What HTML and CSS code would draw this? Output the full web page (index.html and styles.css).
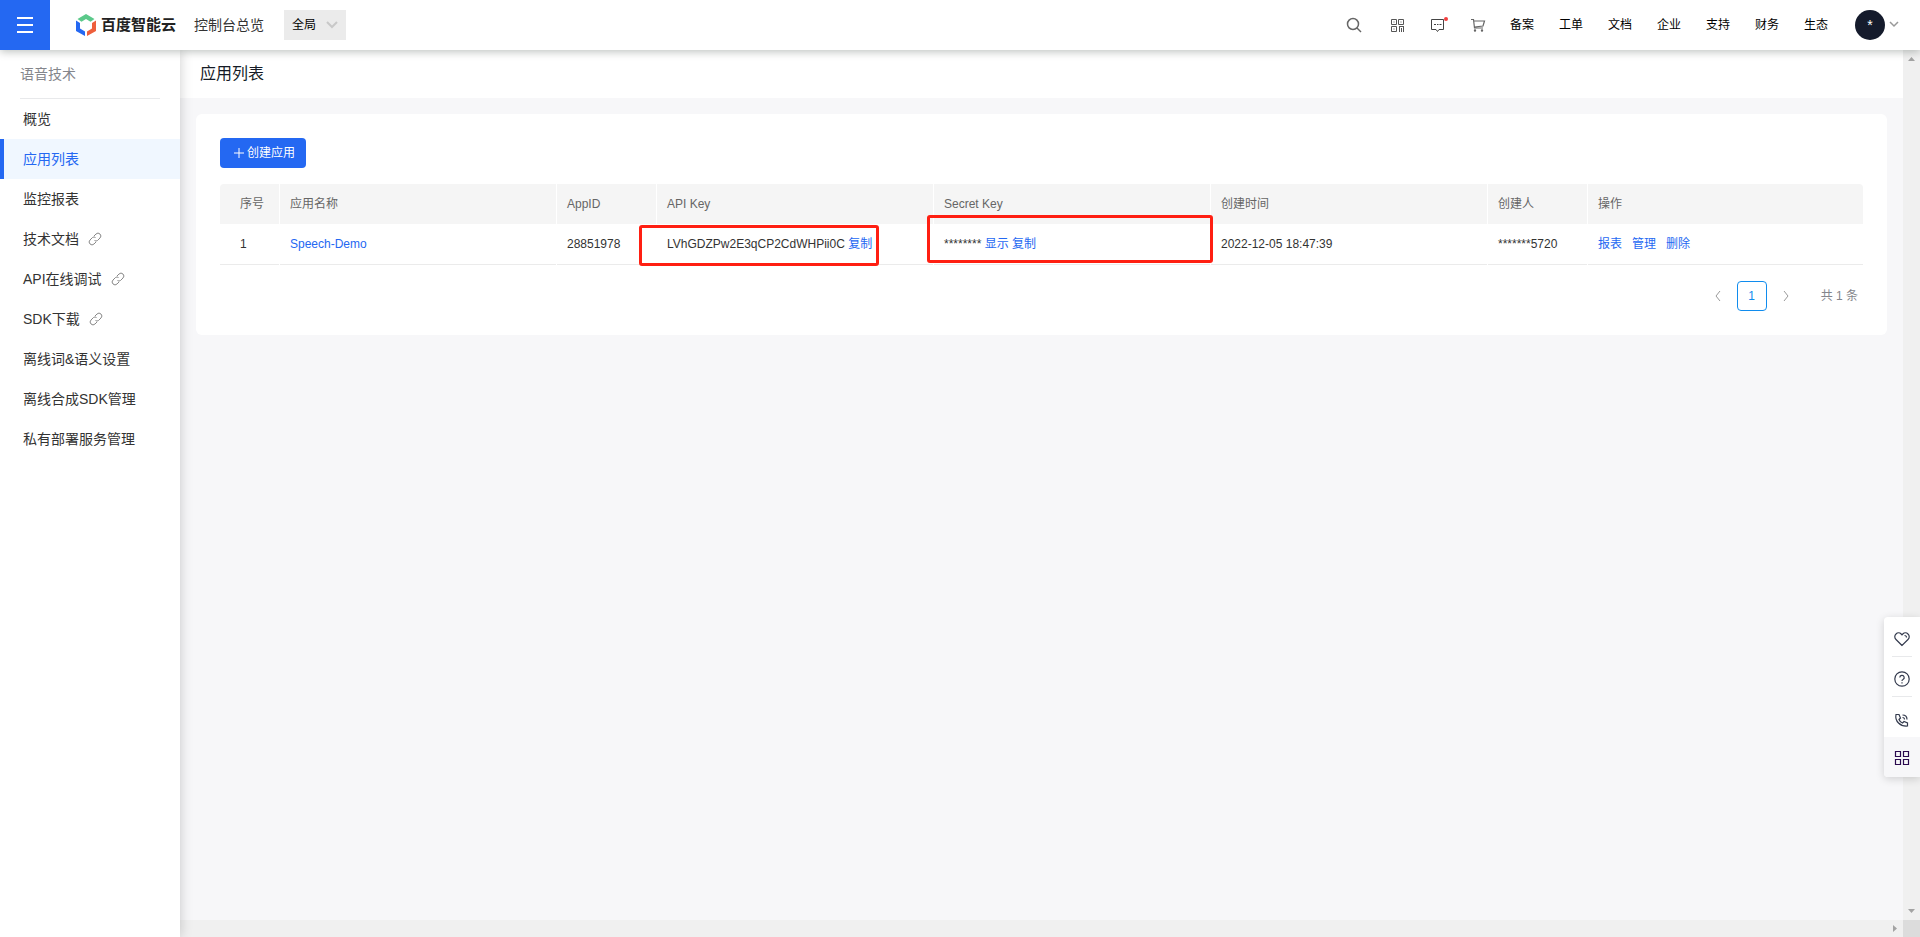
FILE: index.html
```html
<!DOCTYPE html>
<html lang="zh-CN">
<head>
    <meta charset="UTF-8">
    <meta name="viewport" content="width=device-width, initial-scale=1.0">
    <title>应用列表 - 百度智能云</title>
    <link rel="stylesheet" href="styles.css">
</head>
<body>

<header class="header">
    <button class="menu-btn" aria-label="菜单">
        <svg width="18" height="16" viewBox="0 0 18 16"><path d="M1 1h16M1 8h16M1 15h16" stroke="#fff" stroke-width="2"/></svg>
    </button>
    <a class="logo" href="#">
        <svg width="20" height="22" viewBox="0 0 20 22">
            <path d="M1.500 5L10 0l8.500 5-4 2.800L10 5 5.500 7.800z" fill="#5bc98a"/>
            <path d="M0 6.500l4 2.500v5.500l5 3V22l-9-5z" fill="#2468f2"/>
            <path d="M20 6.500L16 9v5.500l-5 3V22l9-5z" fill="#ee5f3c"/>
        </svg>
        <span>百度智能云</span>
    </a>
    <a class="overview" href="#">控制台总览</a>
    <button class="region">全局
        <svg width="12" height="8" viewBox="0 0 12 8"><path d="M1 1l5 5 5-5" fill="none" stroke="#c8c8c8" stroke-width="2"/></svg>
    </button>

    <div class="tools">
        <a class="search" href="#" aria-label="搜索"><svg width="16" height="16" viewBox="0 0 16 16" fill="none" stroke="#666" stroke-width="1.500"><circle cx="7" cy="7" r="5.500"/><path d="M11 11l4 4"/></svg></a>
        <a href="#" aria-label="二维码"><svg width="16" height="16" viewBox="0 0 16 16" fill="none" stroke="#555"><path d="M1.500 2.500h5v5h-5zM8.500 2.500h5v5h-5zM1.500 9.500h5v5h-5zM3.500 5h1M10.500 5h1M3.500 12h1M9 9.500h5M9.500 9v6M11.500 11v4M13.500 9v6"/></svg></a>
        <a class="message" href="#" aria-label="消息"><svg width="16" height="16" viewBox="0 0 16 16" fill="none" stroke="#444"><path d="M1.500 2.500h12v10H9l-1.500 2-1.500-2H1.500zM4 7.500h2M7 7.500h1.500M9.500 7.500h2"/></svg></a>
        <a href="#" aria-label="购物车"><svg width="16" height="16" viewBox="0 0 16 16" fill="none" stroke="#666" stroke-width="1.200"><path d="M1 2.500h2.500l1 8.500h8.500M4 4h10.500l-1.500 5-8.500 1"/><circle cx="5" cy="13.500" r=".6"/><circle cx="12" cy="13.500" r=".6"/></svg></a>
    </div>
    <nav class="links">
        <a href="#">备案</a>
        <a href="#">工单</a>
        <a href="#">文档</a>
        <a href="#">企业</a>
        <a href="#">支持</a>
        <a href="#">财务</a>
        <a href="#">生态</a>
    </nav>
    <button class="user">
        <span class="avatar">*</span>
        <svg width="10" height="8" viewBox="0 0 10 8"><path d="M1 1l4 4 4-4" fill="none" stroke="#999" stroke-width="1.500"/></svg>
    </button>
</header>

<div class="page">
    <aside class="sidebar">
        <h2>语音技术</h2>
        <nav class="menu">
            <a href="#">概览</a>
            <a class="active" href="#">应用列表</a>
            <a href="#">监控报表</a>
            <a href="#">技术文档 <svg class="link-icon" viewBox="0 0 14 14"><path d="M6 4l2-2a2.400 2.400 0 0 1 4 4l-2.500 2.500a2.400 2.400 0 0 1-3 0M8 10l-2 2a2.400 2.400 0 0 1-4-4l2.500-2.500a2.400 2.400 0 0 1 3 0"/></svg></a>
            <a href="#">API在线调试 <svg class="link-icon" viewBox="0 0 14 14"><path d="M6 4l2-2a2.400 2.400 0 0 1 4 4l-2.500 2.500a2.400 2.400 0 0 1-3 0M8 10l-2 2a2.400 2.400 0 0 1-4-4l2.500-2.500a2.400 2.400 0 0 1 3 0"/></svg></a>
            <a href="#">SDK下载 <svg class="link-icon" viewBox="0 0 14 14"><path d="M6 4l2-2a2.400 2.400 0 0 1 4 4l-2.500 2.500a2.400 2.400 0 0 1-3 0M8 10l-2 2a2.400 2.400 0 0 1-4-4l2.500-2.500a2.400 2.400 0 0 1 3 0"/></svg></a>
            <a href="#">离线词&amp;语义设置</a>
            <a href="#">离线合成SDK管理</a>
            <a href="#">私有部署服务管理</a>
        </nav>
    </aside>

    <div class="scroll-area">
        <main class="content">
            <h1>应用列表</h1>
            <section class="card">
                <button class="create-btn">
                    <svg width="10" height="10" viewBox="0 0 10 10"><path d="M5 0v10M0 5h10" stroke="#fff"/></svg>
                    <span>创建应用</span>
                </button>
                <table class="app-table">
                    <thead>
                        <tr>
                            <th class="col-no">序号</th>
                            <th>应用名称</th>
                            <th class="col-small">AppID</th>
                            <th>API Key</th>
                            <th>Secret Key</th>
                            <th>创建时间</th>
                            <th class="col-small">创建人</th>
                            <th class="col-actions">操作</th>
                        </tr>
                    </thead>
                    <tbody>
                        <tr>
                            <td class="col-no">1</td>
                            <td><a href="#">Speech-Demo</a></td>
                            <td>28851978</td>
                            <td class="marked">LVhGDZPw2E3qCP2CdWHPii0C <a href="#">复制</a><span class="mark mark-api"></span></td>
                            <td class="marked">******** <a href="#">显示</a> <a href="#">复制</a><span class="mark mark-secret"></span></td>
                            <td>2022-12-05 18:47:39</td>
                            <td>*******5720</td>
                            <td><div class="actions"><a href="#">报表</a><a href="#">管理</a><a href="#">删除</a></div></td>
                        </tr>
                    </tbody>
                </table>
                <div class="pagination">
                    <button class="arrow" aria-label="上一页"><svg width="6" height="10" viewBox="0 0 6 10"><path d="M5 0L1 5l4 5"/></svg></button>
                    <button class="current">1</button>
                    <button class="arrow" aria-label="下一页"><svg width="6" height="10" viewBox="0 0 6 10"><path d="M1 0l4 5-4 5"/></svg></button>
                    <span class="total">共 1 条</span>
                </div>
            </section>
        </main>
        <div class="bar bar-y">
            <svg width="7" height="4" viewBox="0 0 7 4"><path d="M0 4l3.500-4L7 4z"/></svg>
            <svg width="7" height="4" viewBox="0 0 7 4"><path d="M0 0l3.500 4L7 0z"/></svg>
        </div>
        <div class="bar bar-x">
            <svg width="4" height="7" viewBox="0 0 4 7"><path d="M0 0l4 3.500L0 7z"/></svg>
        </div>
        <div class="corner"></div>
    </div>
</div>

<!-- floating help bar -->
<div class="float-bar">
    <a href="#" aria-label="收藏"><svg width="16" height="16" viewBox="0 0 16 16"><path d="M8 14.500L2 8.500a3.700 3.700 0 0 1 0-5.500 3.700 3.700 0 0 1 5.200 0L8 3.800l.8-.8a3.700 3.700 0 0 1 5.200 0 3.700 3.700 0 0 1 0 5.500zM10.500 4.500q2 0 2 2"/></svg></a>
    <a href="#" aria-label="帮助"><svg width="16" height="16" viewBox="0 0 16 16"><circle cx="8" cy="8" r="7.200"/><path d="M5.800 6.500a2.200 2.200 0 1 1 3.200 2q-1 .4-1 1.500M8 11.200v1.200"/></svg></a>
    <a href="#" aria-label="电话"><svg width="16" height="16" viewBox="0 0 16 16"><path d="M2 2.500h3l1.500 3.500-1.500 1.500q1 2.500 3.500 3.500L10 9.500l3.500 1.500v3Q8 14.500 4.500 11T2 2.500zM8.500 5.500q2 0 2 2M8.500 3q4.500 0 4.500 4.500"/></svg></a>
    <a class="apps" href="#" aria-label="应用"><svg width="16" height="16" viewBox="0 0 16 16"><path d="M1.500 1.500h5v5h-5zM9.500 1.500h5v5h-5zM1.500 9.500h5v5h-5zM9.500 9.500h5v5h-5z"/></svg></a>
</div>

</body>
</html>
```
FILE: styles.css
```css
* {
    box-sizing: border-box;
}
body {
    margin: 0;
    height: 100vh;
    display: flex;
    flex-direction: column;
    overflow: hidden;
    font-family: "Liberation Sans", "Noto Sans CJK SC", sans-serif;
    font-size: 12px;
    line-height: 20px;
    color: #333;
    background-color: #fff;
}
a {
    color: #2468f2;
    text-decoration: none;
}
button {
    font: inherit;
    border: none;
    padding: 0;
    background: none;
    cursor: pointer;
}

/* Header */
.header {
    display: flex;
    align-items: center;
    height: 50px;
    flex: none;
    background-color: #fff;
    box-shadow: 0 2px 8px rgba(0, 20, 10, 0.25);
    position: relative;
    z-index: 2;
}
.header a {
    color: #000;
}
.menu-btn {
    display: flex;
    align-items: center;
    justify-content: center;
    width: 50px;
    height: 50px;
    background-color: #2468f2;
}
.header .logo {
    display: flex;
    align-items: center;
    gap: 5px;
    margin-left: 26px;
    font-size: 15px;
    font-weight: bold;
    color: #222;
}
.header .overview {
    margin-left: 18px;
    font-size: 14px;
    color: #333;
}
.region {
    display: flex;
    align-items: center;
    justify-content: space-between;
    width: 62px;
    height: 30px;
    padding: 0 8px;
    margin-left: 20px;
    background-color: #ebebeb;
}
.tools {
    display: flex;
    align-items: center;
    gap: 24px;
    margin-left: auto;
}
.tools a {
    display: flex;
}
.tools .search {
    margin-right: 4px;
}
.message {
    position: relative;
}
.message::after {
    content: "";
    position: absolute;
    top: 0;
    right: -2px;
    width: 4px;
    height: 4px;
    border-radius: 50%;
    background-color: #f33e3e;
}
.links {
    display: flex;
    gap: 25px;
    margin-left: 24px;
}
.user {
    display: flex;
    align-items: center;
    gap: 4px;
    margin: 0 21px 0 27px;
}
.avatar {
    width: 30px;
    height: 30px;
    border-radius: 50%;
    font-size: 14px;
    line-height: 30px;
    color: #fff;
    background-color: #151b2c;
}

/* Sidebar */
.page {
    display: flex;
    flex: 1;
    min-height: 0;
}
.sidebar {
    width: 180px;
    flex: none;
    background-color: #fff;
    box-shadow: 0 0 12px rgba(0, 0, 0, 0.2);
    position: relative;
    z-index: 1;
}
.sidebar h2 {
    margin: 0 20px;
    padding: 14px 0;
    font-size: 14px;
    font-weight: normal;
    color: #84868c;
    border-bottom: 1px solid #e8e9eb;
}
.menu a {
    display: flex;
    align-items: center;
    gap: 9px;
    height: 40px;
    padding-left: 23px;
    font-size: 14px;
    color: #333;
}
.menu .active {
    padding-left: 19px;
    border-left: 4px solid #2468f2;
    color: #2468f2;
    background-color: #f0f7ff;
}
.link-icon {
    width: 14px;
    height: 14px;
    fill: none;
    stroke: #888;
}

/* Content */
.scroll-area {
    flex: 1;
    display: grid;
    grid-template-columns: 1fr 17px;
    grid-template-rows: 1fr 17px;
}
.content {
    background-color: #f7f7f9;
}
h1 {
    margin: 0;
    padding: 12px 20px;
    font-size: 16px;
    line-height: 24px;
    font-weight: normal;
    color: #151b26;
    background-color: #fff;
}
.card {
    margin: 16px;
    padding: 24px;
    border-radius: 6px;
    background-color: #fff;
}
.create-btn {
    display: flex;
    align-items: center;
    gap: 3px;
    height: 30px;
    padding: 0 11px 0 14px;
    border-radius: 4px;
    color: #fff;
    background-color: #2468f2;
}
.app-table {
    width: 100%;
    margin-top: 16px;
    table-layout: fixed;
    border-spacing: 0;
}
.app-table th,
.app-table td {
    height: 40px;
    padding: 0 10px;
    text-align: left;
    font-weight: normal;
    white-space: nowrap;
    border-right: 1px solid #fff;
}
.app-table th {
    color: #666;
    background-color: #f5f5f5;
}
.app-table td {
    height: 41px;
    padding-bottom: 2px;
    background-image: linear-gradient(#ebebeb, #ebebeb);
    background-size: 100% 1px;
    background-position: bottom;
    background-repeat: no-repeat;
}
.app-table th:first-child {
    border-radius: 4px 0 0 0;
}
.app-table th:last-child {
    border-radius: 0 4px 0 0;
}
.app-table th:last-child,
.app-table td:last-child {
    border-right: none;
}
.app-table .col-no {
    width: 60px;
    padding-left: 20px;
}
.col-small {
    width: 100px;
}
.col-actions {
    width: 275px;
}
.marked {
    position: relative;
}
.mark {
    position: absolute;
    border: 3px solid #ff1f12;
    border-radius: 3px;
    pointer-events: none;
}
.mark-api {
    top: 1px;
    left: -18px;
    width: 240px;
    height: 41px;
}
.mark-secret {
    top: -9px;
    left: -7px;
    width: 286px;
    height: 48px;
}
.actions {
    display: flex;
    gap: 10px;
}
.pagination {
    display: flex;
    align-items: center;
    justify-content: flex-end;
    margin-top: 16px;
}
.arrow {
    display: flex;
    align-items: center;
    justify-content: center;
    width: 38px;
    height: 30px;
}
.arrow svg {
    fill: none;
    stroke: #999;
}
.current {
    width: 30px;
    height: 30px;
    border: 1px solid #108cee;
    border-radius: 4px;
    color: #108cee;
}
.total {
    margin: 0 5px 0 16px;
    color: #84868c;
}

/* Scrollbars */
.bar {
    display: flex;
    align-items: center;
    background-color: #f0f0f0;
}
.bar svg {
    fill: #a3a3a3;
}
.bar-y {
    flex-direction: column;
    justify-content: space-between;
    padding: 7px 0;
}
.bar-x {
    justify-content: flex-end;
    padding-right: 6px;
}
.corner {
    background-color: #dcdcdc;
}

/* Floating bar */
.float-bar {
    position: fixed;
    right: 0;
    bottom: 160px;
    z-index: 3;
    width: 36px;
    border-radius: 4px 0 0 4px;
    background-color: #fff;
    box-shadow: 0 2px 8px rgba(0, 0, 0, 0.16);
}
.float-bar a {
    display: flex;
    align-items: center;
    justify-content: center;
    height: 40px;
    margin: 0 8px;
    padding-top: 5px;
    border-bottom: 1px solid #e8e9eb;
}
.float-bar a:nth-child(3) {
    border-bottom: none;
}
.float-bar .apps {
    margin: 0;
    padding-top: 2px;
    border-bottom: none;
    border-radius: 0 0 0 4px;
    background-color: #f7f7f9;
}
.float-bar svg {
    fill: none;
    stroke: #333a4d;
    stroke-width: 1.2;
}
.float-bar .apps svg {
    stroke: #2b0a4f;
}
```
